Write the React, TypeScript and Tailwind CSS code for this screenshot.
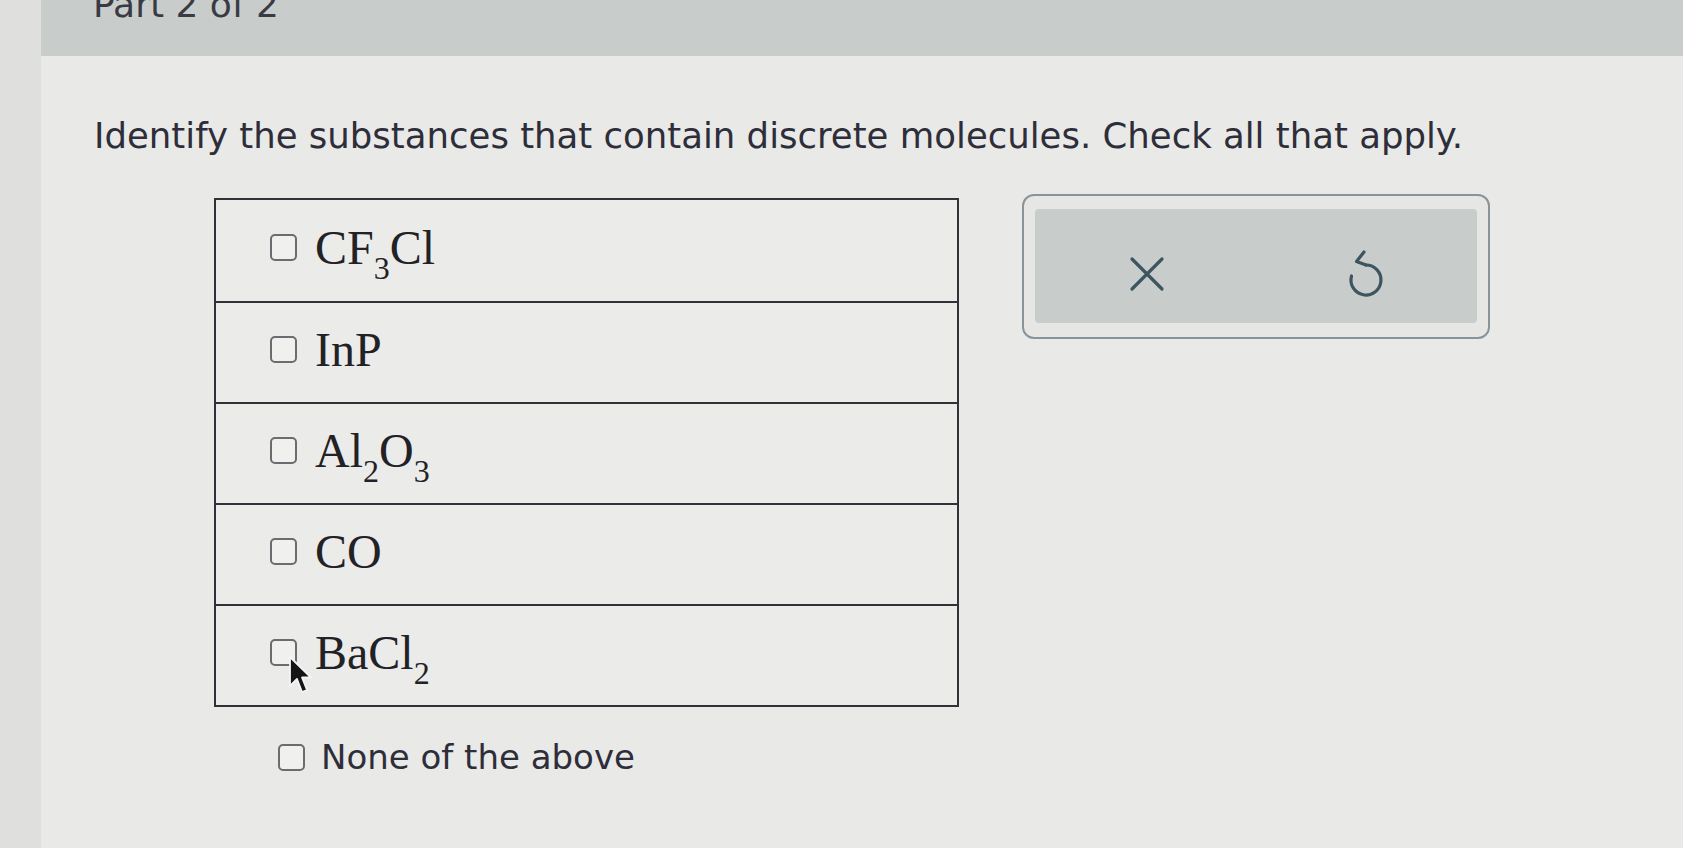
import React from "react";

type Part = { t: string; sub?: boolean };

const rows: Part[][] = [
  [{ t: "CF" }, { t: "3", sub: true }, { t: "Cl" }],
  [{ t: "InP" }],
  [{ t: "Al" }, { t: "2", sub: true }, { t: "O" }, { t: "3", sub: true }],
  [{ t: "CO" }],
  [{ t: "BaCl" }, { t: "2", sub: true }],
];

function Box() {
  return <span className="inline-block w-[27px] h-[27px] shrink-0 rounded-[5px] border-2 border-[#6b6b70] bg-[#f0f0ee]" />;
}

function Formula({ parts }: { parts: Part[] }) {
  return (
    <span className="font-['Liberation_Serif',serif] text-[48px] leading-none text-[#222226]">
      {parts.map((p, i) =>
        p.sub ? (
          <span key={i} className="relative top-[15px] text-[32px]">
            {p.t}
          </span>
        ) : (
          <span key={i}>{p.t}</span>
        )
      )}
    </span>
  );
}

function Cursor() {
  return (
    <svg className="absolute left-[71px] top-[49px]" width="28" height="42" viewBox="0 0 28 42">
      <path d="M3 2 L3 31 L10 24 L15 37 L20 35 L15 22.5 L24 22.5 Z" fill="#151515" stroke="#f5f5f5" strokeWidth="1.8" strokeLinejoin="round" />
    </svg>
  );
}

export default function App() {
  return (
    <div className="w-[1683px] h-[848px] flex bg-[#dddddb] overflow-hidden font-['DejaVu_Sans',Verdana,sans-serif]">
      <div className="w-[41px] shrink-0 bg-[#dfdfdd]" />
      <div className="flex-1 flex flex-col">
        <div className="h-[56px] shrink-0 bg-[#c8cdcc] overflow-hidden pl-[52px]">
          <div className="text-[36px] leading-none text-[#3a3a44] -mt-[13px]">Part 2 of 2</div>
        </div>
        <div className="flex-1 bg-[#e9e9e7] pl-[53px] pt-[60px]">
          <h1 className="text-[35.5px] leading-[40px] text-[#2e2e3a]">
            Identify the substances that contain discrete molecules. Check all that apply.
          </h1>
          <div className="flex items-start mt-[42px] ml-[120px]">
            <div className="flex flex-col">
              <div className="w-[745px] border-2 border-[#333138] bg-[#ebebe9]">
                {rows.map((r, i) => (
                  <div
                    key={i}
                    className={`relative h-[101px] flex items-center gap-[18px] pl-[54px] pb-[6px] ${i > 0 ? "border-t-2 border-[#333138]" : ""}`}
                  >
                    <Box />
                    <Formula parts={r} />
                    {i === 4 && <Cursor />}
                  </div>
                ))}
              </div>
              <div className="flex items-center gap-[16px] pl-[64px] mt-[33px]">
                <Box />
                <span className="text-[34px] leading-none text-[#2e2e3a]">None of the above</span>
              </div>
            </div>
            <div className="ml-[63px] -mt-[4px] w-[468px] h-[145px] shrink-0 rounded-[12px] border-2 border-[#89939a] pt-[13px] pb-[14px] px-[11px] bg-[#e6e7e5]">
              <div className="h-full rounded-[4px] bg-[#c8cdcc] flex items-center pl-[94px] gap-[182px] pt-[15px]">
                <svg width="36" height="36" viewBox="0 0 36 36" fill="none" stroke="#3d5560" strokeWidth="3.2" strokeLinecap="round">
                  <path d="M3 3 L33 33 M33 3 L3 33" />
                </svg>
                <svg width="38" height="50" viewBox="16 4 38 50" fill="none" stroke="#3d5560" strokeWidth="3.2" strokeLinecap="round" strokeLinejoin="round">
                  <path d="M35 20 A15 15 0 1 1 20.5 31" />
                  <path d="M33 7 L25.5 16.5 L35 20" />
                </svg>
              </div>
            </div>
          </div>
        </div>
      </div>
    </div>
  );
}
